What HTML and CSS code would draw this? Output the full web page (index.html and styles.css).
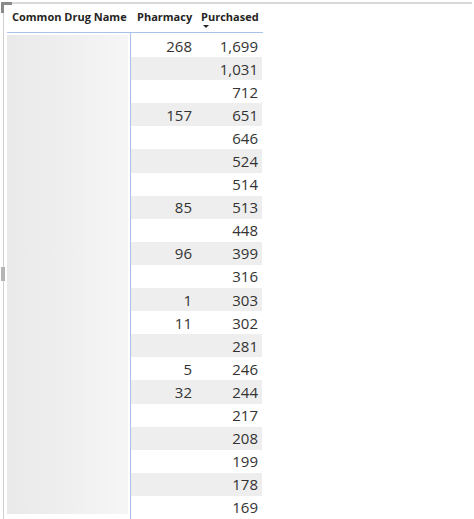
FILE: index.html
```html
<!DOCTYPE html>
<html>
<head>
<meta charset="utf-8">
<link rel="stylesheet" href="styles.css">
</head>
<body>
<div class="visual">
  <div class="corner corner-h"></div>
  <div class="corner corner-v"></div>
  <div class="handle"></div>
  <div class="table">
    <div class="head">
      <div class="hcell c1">Common Drug Name</div>
      <div class="hcell c2">Pharmacy</div>
      <div class="hcell c3">Purchased<span class="sort"></span></div>
    </div>
    <div class="body">
      <div class="names"><div class="blur"></div></div>
      <div class="nums">
        <div class="row"><span class="n2">268</span><span class="n3">1,699</span></div>
        <div class="row alt"><span class="n2"></span><span class="n3">1,031</span></div>
        <div class="row"><span class="n2"></span><span class="n3">712</span></div>
        <div class="row alt"><span class="n2">157</span><span class="n3">651</span></div>
        <div class="row"><span class="n2"></span><span class="n3">646</span></div>
        <div class="row alt"><span class="n2"></span><span class="n3">524</span></div>
        <div class="row"><span class="n2"></span><span class="n3">514</span></div>
        <div class="row alt"><span class="n2">85</span><span class="n3">513</span></div>
        <div class="row"><span class="n2"></span><span class="n3">448</span></div>
        <div class="row alt"><span class="n2">96</span><span class="n3">399</span></div>
        <div class="row"><span class="n2"></span><span class="n3">316</span></div>
        <div class="row alt"><span class="n2">1</span><span class="n3">303</span></div>
        <div class="row"><span class="n2">11</span><span class="n3">302</span></div>
        <div class="row alt"><span class="n2"></span><span class="n3">281</span></div>
        <div class="row"><span class="n2">5</span><span class="n3">246</span></div>
        <div class="row alt"><span class="n2">32</span><span class="n3">244</span></div>
        <div class="row"><span class="n2"></span><span class="n3">217</span></div>
        <div class="row alt"><span class="n2"></span><span class="n3">208</span></div>
        <div class="row"><span class="n2"></span><span class="n3">199</span></div>
        <div class="row alt"><span class="n2"></span><span class="n3">178</span></div>
        <div class="row"><span class="n2"></span><span class="n3">169</span></div>
      </div>
    </div>
  </div>
</div>
</body>
</html>
```

FILE: styles.css
```css
html, body {
  margin: 0;
  padding: 0;
  background: #fff;
  overflow: hidden;
}
body {
  font-family: "Open Sans", "Noto Sans", sans-serif;
  color: #252423;
}
.visual {
  position: relative;
  margin: 2px 0 0 3px;
  width: 468px;
  height: 540px;
  border-top: 2px solid #d9d9d9;
  border-left: 1px solid #d0d0d0;
}
.corner {
  position: absolute;
  background: #8a8a8a;
}
.corner-h { left: -3px; top: -2px; width: 11px; height: 3px; }
.corner-v { left: -3px; top: -2px; width: 3px; height: 11px; }
.handle {
  position: absolute;
  left: -3px;
  top: 263px;
  width: 4px;
  height: 14px;
  background: #b5b5b5;
}
.table {
  margin-left: 3px;
  width: 256px;
}
.head {
  display: flex;
  height: 28px;
  border-bottom: 1px solid #a8c0ea;
}
.hcell {
  font-weight: 700;
  font-size: 11px;
  padding-top: 5px;
  padding-left: 5px;
  box-sizing: border-box;
  position: relative;
  white-space: nowrap;
}
.c1 { width: 124px; }
.c2 { width: 65px; padding-left: 6px; }
.c3 { width: 67px; }
.sort {
  position: absolute;
  left: 7px;
  top: 21px;
  width: 0;
  height: 0;
  border-left: 3px solid transparent;
  border-right: 3px solid transparent;
  border-top: 3px solid #252423;
}
.body {
  display: flex;
}
.names {
  width: 124px;
  border-right: 1px solid #a8c0ea;
  padding: 2px 2px 0 0;
  box-sizing: border-box;
}
.blur {
  height: 479px;
  background: linear-gradient(90deg, #e9e9e9 0%, #f0f0f0 55%, #f6f6f6 100%);
}
.nums {
  width: 131px;
  padding-top: 1px;
}
.row {
  display: flex;
  height: 23.1px;
  align-items: center;
  font-size: 15px;
  color: #333;
}
.row.alt { background: #eeeeee; }
.n2 {
  width: 61px;
  text-align: right;
}
.n3 {
  width: 66px;
  text-align: right;
}
```
